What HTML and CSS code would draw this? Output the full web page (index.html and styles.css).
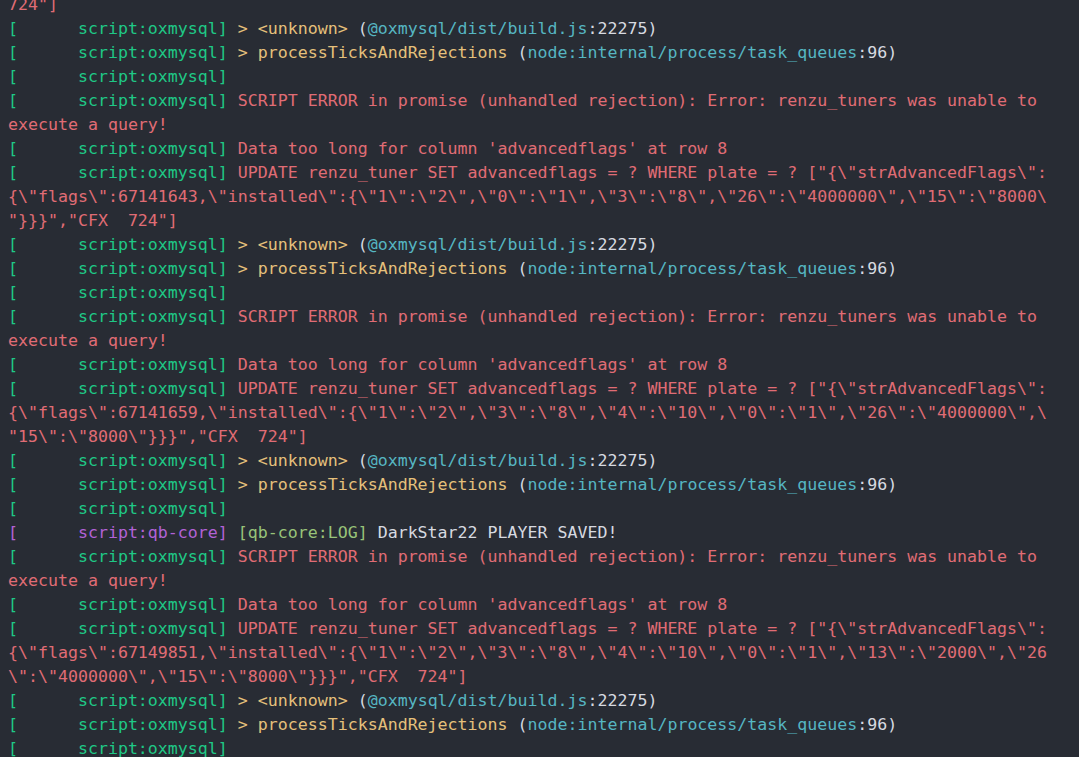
FILE: index.html
```html
<!DOCTYPE html>
<html lang="en">
  <head>
    <meta charset="UTF-8" />
    <meta name="viewport" content="width=device-width, initial-scale=1.0" />
    <title>Terminal</title>
    <link rel="stylesheet" href="styles.css">
  </head>
  <body>
    <div class="term">
      <div class="line"><span class="r">724"]</span></div>
      <div class="line"><span class="g">[      script:oxmysql]</span> <span class="y">&gt; &lt;unknown&gt;</span> (<span class="c">@oxmysql/dist/build.js</span>:22275)</div>
      <div class="line"><span class="g">[      script:oxmysql]</span> <span class="y">&gt; processTicksAndRejections</span> (<span class="c">node:internal/process/task_queues</span>:96)</div>
      <div class="line"><span class="g">[      script:oxmysql]</span></div>
      <div class="line"><span class="g">[      script:oxmysql]</span> <span class="r">SCRIPT ERROR in promise (unhandled rejection): Error: renzu_tuners was unable to</span></div>
      <div class="line"><span class="r">execute a query!</span></div>
      <div class="line"><span class="g">[      script:oxmysql]</span> <span class="r">Data too long for column 'advancedflags' at row 8</span></div>
      <div class="line"><span class="g">[      script:oxmysql]</span> <span class="r">UPDATE renzu_tuner SET advancedflags = ? WHERE plate = ? ["{\"strAdvancedFlags\":</span></div>
      <div class="line"><span class="r">{\"flags\":67141643,\"installed\":{\"1\":\"2\",\"0\":\"1\",\"3\":\"8\",\"26\":\"4000000\",\"15\":\"8000\</span></div>
      <div class="line"><span class="r">"}}}","CFX  724"]</span></div>
      <div class="line"><span class="g">[      script:oxmysql]</span> <span class="y">&gt; &lt;unknown&gt;</span> (<span class="c">@oxmysql/dist/build.js</span>:22275)</div>
      <div class="line"><span class="g">[      script:oxmysql]</span> <span class="y">&gt; processTicksAndRejections</span> (<span class="c">node:internal/process/task_queues</span>:96)</div>
      <div class="line"><span class="g">[      script:oxmysql]</span></div>
      <div class="line"><span class="g">[      script:oxmysql]</span> <span class="r">SCRIPT ERROR in promise (unhandled rejection): Error: renzu_tuners was unable to</span></div>
      <div class="line"><span class="r">execute a query!</span></div>
      <div class="line"><span class="g">[      script:oxmysql]</span> <span class="r">Data too long for column 'advancedflags' at row 8</span></div>
      <div class="line"><span class="g">[      script:oxmysql]</span> <span class="r">UPDATE renzu_tuner SET advancedflags = ? WHERE plate = ? ["{\"strAdvancedFlags\":</span></div>
      <div class="line"><span class="r">{\"flags\":67141659,\"installed\":{\"1\":\"2\",\"3\":\"8\",\"4\":\"10\",\"0\":\"1\",\"26\":\"4000000\",\</span></div>
      <div class="line"><span class="r">"15\":\"8000\"}}}","CFX  724"]</span></div>
      <div class="line"><span class="g">[      script:oxmysql]</span> <span class="y">&gt; &lt;unknown&gt;</span> (<span class="c">@oxmysql/dist/build.js</span>:22275)</div>
      <div class="line"><span class="g">[      script:oxmysql]</span> <span class="y">&gt; processTicksAndRejections</span> (<span class="c">node:internal/process/task_queues</span>:96)</div>
      <div class="line"><span class="g">[      script:oxmysql]</span></div>
      <div class="line"><span class="p">[      script:qb-core]</span> <span class="l">[qb-core:LOG]</span> DarkStar22 PLAYER SAVED!</div>
      <div class="line"><span class="g">[      script:oxmysql]</span> <span class="r">SCRIPT ERROR in promise (unhandled rejection): Error: renzu_tuners was unable to</span></div>
      <div class="line"><span class="r">execute a query!</span></div>
      <div class="line"><span class="g">[      script:oxmysql]</span> <span class="r">Data too long for column 'advancedflags' at row 8</span></div>
      <div class="line"><span class="g">[      script:oxmysql]</span> <span class="r">UPDATE renzu_tuner SET advancedflags = ? WHERE plate = ? ["{\"strAdvancedFlags\":</span></div>
      <div class="line"><span class="r">{\"flags\":67149851,\"installed\":{\"1\":\"2\",\"3\":\"8\",\"4\":\"10\",\"0\":\"1\",\"13\":\"2000\",\"26</span></div>
      <div class="line"><span class="r">\":\"4000000\",\"15\":\"8000\"}}}","CFX  724"]</span></div>
      <div class="line"><span class="g">[      script:oxmysql]</span> <span class="y">&gt; &lt;unknown&gt;</span> (<span class="c">@oxmysql/dist/build.js</span>:22275)</div>
      <div class="line"><span class="g">[      script:oxmysql]</span> <span class="y">&gt; processTicksAndRejections</span> (<span class="c">node:internal/process/task_queues</span>:96)</div>
      <div class="line"><span class="g">[      script:oxmysql]</span></div>
    </div>
  </body>
</html>
```

FILE: styles.css
```css
html,
body {
  margin: 0;
  height: 100%;
  background-color: #282c34;
  overflow: hidden;
}
.term {
  margin-top: -7px;
  padding: 0 8px;
  font-family: "DejaVu Sans Mono", "Liberation Mono", monospace;
  font-size: 16.6px;
  line-height: 24px;
  color: #d7dae0;
}
.line {
  height: 24px;
  white-space: pre;
}
.g {
  color: #1fc886;
}
.r {
  color: #e06c75;
}
.y {
  color: #e5c07b;
}
.c {
  color: #56b6c2;
}
.p {
  color: #b262d6;
}
.l {
  color: #98c379;
}
```
